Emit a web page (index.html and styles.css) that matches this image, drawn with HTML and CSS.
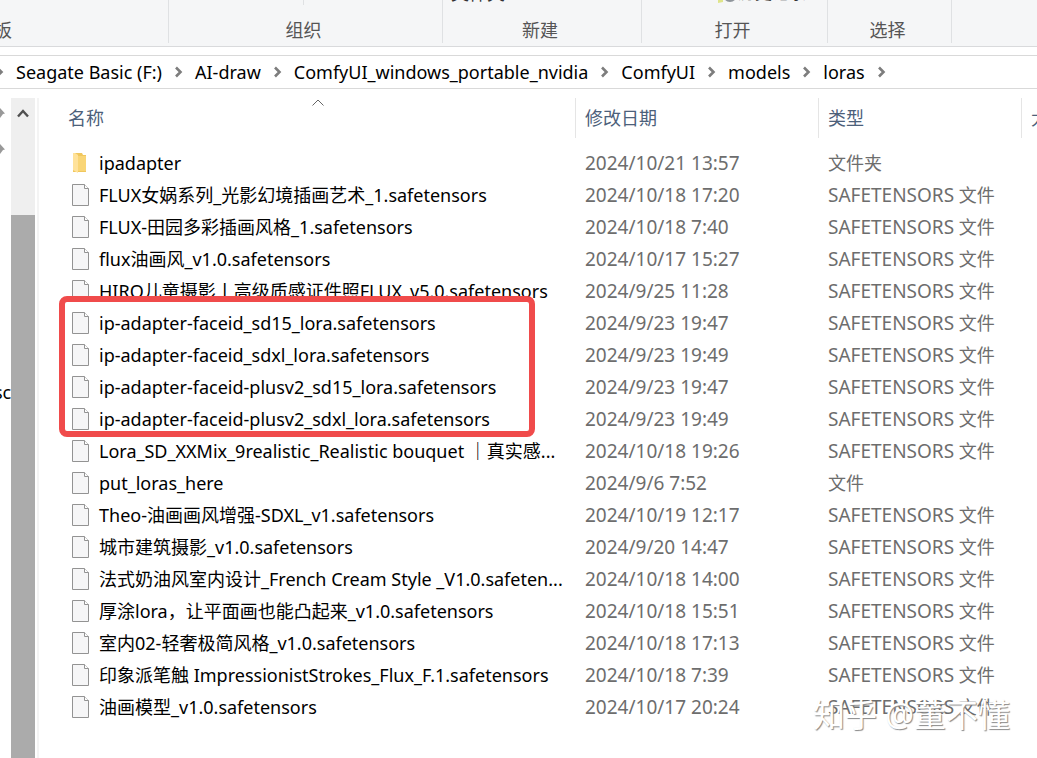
FILE: index.html
```html
<!DOCTYPE html>
<html lang="zh-CN">
<head>
<meta charset="utf-8">
<title>loras</title>
<link rel="stylesheet" href="styles.css">
</head>
<body>
<svg class="defs" aria-hidden="true">
  <symbol id="file" viewBox="0 0 17 22">
    <path d="M.5.5h12l4 4v17H.5z" fill="#f6f6f7" stroke="#939393"/>
    <path d="M12.500.5v4h4" fill="#fff" stroke="#939393"/>
  </symbol>
  <symbol id="folder" viewBox="0 0 17 22">
    <path d="M1 1h9l1 2h3v17H1z" fill="#f0c75e"/>
    <path d="M1 1h2l3 2v18l-5-3z" fill="#ffe29a"/>
    <path d="M6 4h8v15H6z" fill="#f9d576"/>
  </symbol>
  <symbol id="chevron" viewBox="0 0 8 12"><path d="M1 1.500L5.500 6 1 10.500" fill="none" stroke="#7d7d7d" stroke-width="2.600"/></symbol>
  <symbol id="pin" viewBox="0 0 6 14"><path d="M0 1l5 5.500-2 .5-3 4z" fill="#999"/></symbol>
</svg>

<header class="ribbon">
  <section class="group group-clipboard"><span class="label">板</span></section>
  <section class="group group-organize"><span class="tick"></span><span class="label">组织</span></section>
  <section class="group group-new"><span class="command">文件夹</span><span class="label">新建</span></section>
  <section class="group group-open">
    <span class="command command-history"><svg width="20" height="20" viewBox="0 0 20 20"><path d="M0 13l5-3v9l-5 1z" fill="#dfe58a"/><circle cx="12" cy="12" r="7" fill="#8f959b"/><path d="M8 13h7v3H8z" fill="#b9c0c7"/></svg>历史记录</span>
    <span class="label">打开</span>
  </section>
  <section class="group group-select"><span class="label">选择</span></section>
</header>

<nav class="address" aria-label="路径">
  <svg class="sep sep-first"><use href="#chevron"/></svg>
  <a href="#">Seagate Basic (F:)</a><svg class="sep"><use href="#chevron"/></svg>
  <a href="#">AI-draw</a><svg class="sep"><use href="#chevron"/></svg>
  <a href="#">ComfyUI_windows_portable_nvidia</a><svg class="sep"><use href="#chevron"/></svg>
  <a href="#">ComfyUI</a><svg class="sep"><use href="#chevron"/></svg>
  <a href="#">models</a><svg class="sep"><use href="#chevron"/></svg>
  <a href="#">loras</a><svg class="sep"><use href="#chevron"/></svg>
</nav>

<div class="body">
  <aside class="tree">
    <svg class="pin"><use href="#pin"/></svg>
    <svg class="pin"><use href="#pin"/></svg>
    <span class="tree-item">sc</span>
  </aside>
  <div class="scrollbar">
    <button class="scroll-up" aria-label="向上滚动"><svg width="12" height="9" viewBox="0 0 12 9"><path d="M1 7.500L6 2l5 5.500" fill="none" stroke="#505050" stroke-width="2.400"/></svg></button>
    <div class="thumb"></div>
  </div>
  <main class="content">
    <table class="files">
      <colgroup><col class="c-name"><col class="c-date"><col class="c-type"><col></colgroup>
      <thead>
        <tr>
          <th><button>名称</button><svg class="sort" viewBox="0 0 12 7"><path d="M.5 6.500L6 1l5.500 5.500" fill="none" stroke="#666"/></svg></th>
          <th><button>修改日期</button></th>
          <th><button>类型</button></th>
          <th><button>大小</button></th>
        </tr>
      </thead>
      <tbody>
        <tr><td><svg class="icon"><use href="#folder"/></svg>ipadapter</td><td class="date">2024/10/21 13:57</td><td>文件夹</td><td></td></tr>
        <tr><td><svg class="icon"><use href="#file"/></svg>FLUX女娲系列_光影幻境插画艺术_1.safetensors</td><td class="date">2024/10/18 17:20</td><td><span class="ext">SAFETENSORS</span> 文件</td><td></td></tr>
        <tr><td><svg class="icon"><use href="#file"/></svg>FLUX-田园多彩插画风格_1.safetensors</td><td class="date">2024/10/18 7:40</td><td><span class="ext">SAFETENSORS</span> 文件</td><td></td></tr>
        <tr><td><svg class="icon"><use href="#file"/></svg>flux油画风_v1.0.safetensors</td><td class="date">2024/10/17 15:27</td><td><span class="ext">SAFETENSORS</span> 文件</td><td></td></tr>
        <tr><td><svg class="icon"><use href="#file"/></svg>HIRO儿童摄影丨高级质感证件照FLUX_v5.0.safetensors</td><td class="date">2024/9/25 11:28</td><td><span class="ext">SAFETENSORS</span> 文件</td><td></td></tr>
        <tr><td><svg class="icon"><use href="#file"/></svg>ip-adapter-faceid_sd15_lora.safetensors</td><td class="date">2024/9/23 19:47</td><td><span class="ext">SAFETENSORS</span> 文件</td><td></td></tr>
        <tr><td><svg class="icon"><use href="#file"/></svg>ip-adapter-faceid_sdxl_lora.safetensors</td><td class="date">2024/9/23 19:49</td><td><span class="ext">SAFETENSORS</span> 文件</td><td></td></tr>
        <tr><td><svg class="icon"><use href="#file"/></svg>ip-adapter-faceid-plusv2_sd15_lora.safetensors</td><td class="date">2024/9/23 19:47</td><td><span class="ext">SAFETENSORS</span> 文件</td><td></td></tr>
        <tr><td><svg class="icon"><use href="#file"/></svg>ip-adapter-faceid-plusv2_sdxl_lora.safetensors</td><td class="date">2024/9/23 19:49</td><td><span class="ext">SAFETENSORS</span> 文件</td><td></td></tr>
        <tr><td><svg class="icon"><use href="#file"/></svg>Lora_SD_XXMix_9realistic_Realistic bouquet ｜真实感...</td><td class="date">2024/10/18 19:26</td><td><span class="ext">SAFETENSORS</span> 文件</td><td></td></tr>
        <tr><td><svg class="icon"><use href="#file"/></svg>put_loras_here</td><td class="date">2024/9/6 7:52</td><td>文件</td><td></td></tr>
        <tr><td><svg class="icon"><use href="#file"/></svg>Theo-油画画风增强-SDXL_v1.safetensors</td><td class="date">2024/10/19 12:17</td><td><span class="ext">SAFETENSORS</span> 文件</td><td></td></tr>
        <tr><td><svg class="icon"><use href="#file"/></svg>城市建筑摄影_v1.0.safetensors</td><td class="date">2024/9/20 14:47</td><td><span class="ext">SAFETENSORS</span> 文件</td><td></td></tr>
        <tr><td><svg class="icon"><use href="#file"/></svg>法式奶油风室内设计_French Cream Style _V1.0.safeten...</td><td class="date">2024/10/18 14:00</td><td><span class="ext">SAFETENSORS</span> 文件</td><td></td></tr>
        <tr><td><svg class="icon"><use href="#file"/></svg>厚涂lora，让平面画也能凸起来_v1.0.safetensors</td><td class="date">2024/10/18 15:51</td><td><span class="ext">SAFETENSORS</span> 文件</td><td></td></tr>
        <tr><td><svg class="icon"><use href="#file"/></svg>室内02-轻奢极简风格_v1.0.safetensors</td><td class="date">2024/10/18 17:13</td><td><span class="ext">SAFETENSORS</span> 文件</td><td></td></tr>
        <tr><td><svg class="icon"><use href="#file"/></svg>印象派笔触 ImpressionistStrokes_Flux_F.1.safetensors</td><td class="date">2024/10/18 7:39</td><td><span class="ext">SAFETENSORS</span> 文件</td><td></td></tr>
        <tr><td><svg class="icon"><use href="#file"/></svg>油画模型_v1.0.safetensors</td><td class="date">2024/10/17 20:24</td><td><span class="ext">SAFETENSORS</span> 文件</td><td></td></tr>
      </tbody>
    </table>
    <div class="highlight"></div>
  </main>
</div>
<div class="watermark">知乎 @董不懂</div>
</body>
</html>
```
FILE: styles.css
```css
* { box-sizing: border-box; }
body {
  margin: 0;
  min-height: 100vh;
  display: flex;
  flex-direction: column;
  position: relative;
  overflow: hidden;
  background: #fff;
  color: #000;
  font: 18px/24px "Noto Sans", "Noto Sans CJK SC", sans-serif;
}
button { font: inherit; color: inherit; background: none; border: 0; padding: 0; }
.defs { position: absolute; width: 0; height: 0; }

.ribbon {
  display: flex;
  height: 47px;
  padding-bottom: 3px;
  overflow: hidden;
  background: #f5f6f7;
  border-bottom: 1px solid #d9dadc;
}
.group {
  display: flex;
  flex-direction: column;
  justify-content: flex-end;
  align-items: center;
  gap: 12px;
  flex-shrink: 0;
  padding-right: 4px;
  border-right: 1px solid #dfe1e3;
}
.group-clipboard { width: 169px; align-items: flex-start; }
.group-clipboard .label { margin-left: -6px; }
.group-organize { width: 274px; }
.group-new { width: 199px; }
.group-open { width: 186px; }
.group-select { width: 124px; }
.label { color: #555; line-height: 26px; }
.command { line-height: 24px; color: #333; align-self: flex-start; padding-left: 8px; }
.command-history { display: flex; align-items: center; padding-left: 76px; font-size: 17px; }
.tick { width: 1px; height: 24px; background: #dfe1e3; }

.address {
  display: flex;
  align-items: center;
  height: 34px;
  margin-top: 8px;
  padding-bottom: 1px;
  border: solid #d9d9d9;
  border-width: 1px 0;
}
.address a { color: #000; text-decoration: none; }
.sep { width: 8px; height: 12px; margin: 0 12px 0 13px; flex-shrink: 0; }
.sep-first { margin: 0 12px 0 -4px; }

.body { display: flex; flex: 1; padding-top: 9px; }
.tree { width: 11px; overflow: hidden; display: flex; flex-direction: column; align-items: flex-start; padding-top: 9px; gap: 22px; }
.pin { width: 6px; height: 14px; flex-shrink: 0; }
.tree-item { margin: 201px 0 0 -6px; }
.scrollbar { width: 24px; background: #efefef; display: flex; flex-direction: column; }
.scroll-up { height: 30px; display: grid; place-items: center; }
.thumb { flex: 1; margin-top: 87px; background: #ababab; }
.content { position: relative; flex: 1; min-width: 0; margin-left: 2px; border-left: 2px solid #f4f4f4; }

.files { width: 100%; table-layout: fixed; border-collapse: separate; border-spacing: 0; }
.c-name { width: 537px; }
.c-date { width: 243px; }
.c-type { width: 203px; }
th, td { padding: 0 0 0 9px; text-align: left; font-weight: 400; white-space: nowrap; overflow: hidden; }
th { position: relative; height: 40px; color: #4c607a; border-right: 1px solid #e5e5e5; }
th:last-child { border-right: 0; }
th:first-child { padding-left: 29px; }
.sort { position: absolute; left: 51%; top: 1px; width: 12px; height: 7px; }
td { height: 32px; color: #6d6d6d; }
.date, .ext { font-size: 19px; }
tbody::before { content: ""; display: block; height: 9px; }
td:first-child { padding-left: 33px; color: #000; }
.icon { width: 17px; height: 22px; margin: 1px 10px 0 0; vertical-align: top; }

.highlight {
  position: absolute;
  left: 20px;
  top: 198px;
  width: 476px;
  height: 141px;
  border: 6px solid #f04b4b;
  border-radius: 8px;
}
.watermark {
  position: absolute;
  right: 27px;
  bottom: 23px;
  font-size: 32px;
  line-height: 40px;
  color: #fff;
  text-shadow: 1px 1px 1px #888;
}
```
